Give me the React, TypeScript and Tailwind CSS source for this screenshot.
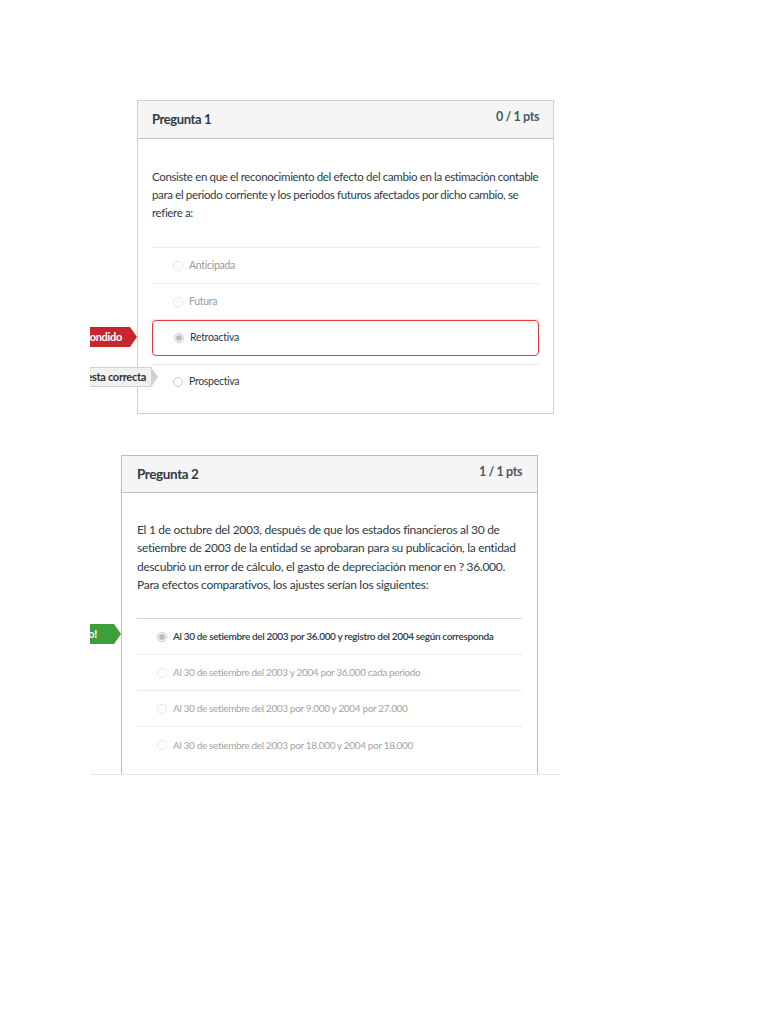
const q1Options = [
  { label: 'Anticipada', state: 'faded' },
  { label: 'Futura', state: 'faded' },
  { label: 'Retroactiva', state: 'wrong' },
  { label: 'Prospectiva', state: 'plain' },
]

const q2Options = [
  { label: 'Al 30 de setiembre del 2003 por 36.000 y registro del 2004 según corresponda', picked: true },
  { label: 'Al 30 de setiembre del 2003 y 2004 por 36.000 cada periodo', picked: false },
  { label: 'Al 30 de setiembre del 2003 por 9.000 y 2004 por 27.000', picked: false },
  { label: 'Al 30 de setiembre del 2003 por 18.000 y 2004 por 18.000', picked: false },
]

function Radio({ checked, faded }: { checked?: boolean; faded?: boolean }) {
  return (
    <span
      className={
        'inline-flex h-[10px] w-[10px] shrink-0 items-center justify-center rounded-full border ' +
        (faded ? 'border-[#e6e6e6]' : 'border-[#c9c9c9]')
      }
    >
      {checked && <span className="h-[6px] w-[6px] rounded-full bg-[#bdbdbd]" />}
    </span>
  )
}

// answer tags hang off the left edge of the cropped screenshot, so only their tail shows
function Tag({ text, tone, top, tip }: { text: string; tone: 'red' | 'gray' | 'green'; top: number; tip: number }) {
  const body =
    tone === 'red'
      ? 'bg-[#c8262c] text-white pr-[8px]'
      : tone === 'green'
        ? 'bg-[#3e9f3a] text-white pr-[17px]'
        : 'bg-[#f1f1f1] text-[#333] border-y border-l border-[#d0d0d0] pr-[5px]'
  const arrow =
    tone === 'red' ? 'border-l-[#c8262c]' : tone === 'green' ? 'border-l-[#3e9f3a]' : 'border-l-[#d0d0d0]'
  return (
    <div className="absolute left-[90px] flex justify-end overflow-hidden" style={{ top, width: tip - 90 }}>
      <div className="flex h-[20px] shrink-0 items-stretch">
        <span className={'flex items-center whitespace-nowrap pl-2 text-[11px] font-bold tracking-[-0.3px] ' + body}>
          {text}
        </span>
        <span className={'h-0 w-0 border-y-[10px] border-l-[7px] border-y-transparent ' + arrow} />
      </div>
    </div>
  )
}

export default function App() {
  return (
    <div className="relative min-h-[1024px] bg-white pt-[100px] text-[#2d3b45]" style={{ fontFamily: 'Lato, "Liberation Sans", sans-serif' }}>
      {/* Pregunta 1 */}
      <div className="ml-[137px] w-[417px] border border-[#cfcfcf]">
        <div className="flex h-[38px] items-center justify-between border-b border-[#c4c4c4] bg-[#f5f5f5] px-[14px]">
          <h3 className="text-[13px] font-bold tracking-[-0.4px]">Pregunta 1</h3>
          <span className="-mt-[4px] text-[12.5px] font-bold tracking-[-0.4px] text-[#4b5a63]">0 / 1 pts</span>
        </div>
        <div className="px-[14px] pb-[15px] pt-[29px]">
          <p className="text-[11.5px] leading-[18px] tracking-[-0.35px] text-[#2d3b45]">
            Consiste en que el reconocimiento del efecto del cambio en la estimación contable para el periodo corriente y
            los periodos futuros afectados por dicho cambio, se refiere a:
          </p>
          <div className="mt-[25px] border-t border-[#ececec]">
            {q1Options.map((o) =>
              o.state === 'wrong' ? (
                <div key={o.label} className="flex h-[36px] items-center gap-[6px] rounded-[4px] border border-[#e8373d] pl-[21px]">
                  <Radio checked />
                  <span className="text-[10.5px] tracking-[-0.3px] text-[#2d3b45]">{o.label}</span>
                </div>
              ) : (
                <div
                  key={o.label}
                  className={
                    'flex items-center gap-[6px] pl-[21px] ' +
                    (o.state === 'plain' ? 'mt-[8px] h-[34px] border-t border-[#e2e2e2]' : 'h-[36px] border-b border-[#ececec] last:border-b-0')
                  }
                >
                  <Radio faded={o.state === 'faded'} />
                  <span className={'text-[10.5px] tracking-[-0.3px] ' + (o.state === 'faded' ? 'text-[#9a9a9a]' : 'text-[#2d3b45]')}>
                    {o.label}
                  </span>
                </div>
              )
            )}
          </div>
        </div>
      </div>

      {/* Pregunta 2 */}
      <div className="ml-[121px] mt-[41px] w-[417px] border-x border-t border-[#bdbdbd]">
        <div className="flex h-[37px] items-center justify-between border-b border-[#c4c4c4] bg-[#f5f5f5] px-[15px]">
          <h3 className="text-[13.5px] font-bold tracking-[-0.4px]">Pregunta 2</h3>
          <span className="-mt-[4px] text-[12.5px] font-bold tracking-[-0.4px] text-[#4b5a63]">1 / 1 pts</span>
        </div>
        <div className="px-[15px] pb-[11px] pt-[28px]">
          <p className="text-[12px] leading-[18.3px] tracking-[-0.3px] text-[#2d3b45]">
            El 1 de octubre del 2003, después de que los estados financieros al 30 de setiembre de 2003 de la entidad se
            aprobaran para su publicación, la entidad descubrió un error de cálculo, el gasto de depreciación menor en ?
            36.000.
            <br />
            Para efectos comparativos, los ajustes serían los siguientes:
          </p>
          <div className="mt-[24px] border-t border-[#d6d6d6]">
            {q2Options.map((o) => (
              <div key={o.label} className="flex h-[36px] items-center gap-[6px] border-b border-[#ececec] pl-[20px] last:border-b-0">
                <Radio checked={o.picked} faded={!o.picked} />
                <span
                  className={
                    'whitespace-nowrap text-[10px] tracking-[-0.35px] ' + (o.picked ? 'font-semibold text-[#2d3b45]' : 'text-[#a3a3a3]')
                  }
                >
                  {o.label}
                </span>
              </div>
            ))}
          </div>
        </div>
      </div>
      <div className="ml-[90px] w-[470px] border-t border-[#e6e6e6]" />

      <Tag text="Respondido" tone="red" top={327} tip={137} />
      <Tag text="Respuesta correcta" tone="gray" top={367} tip={158} />
      <Tag text="¡Correcto!" tone="green" top={624} tip={121} />
    </div>
  )
}
